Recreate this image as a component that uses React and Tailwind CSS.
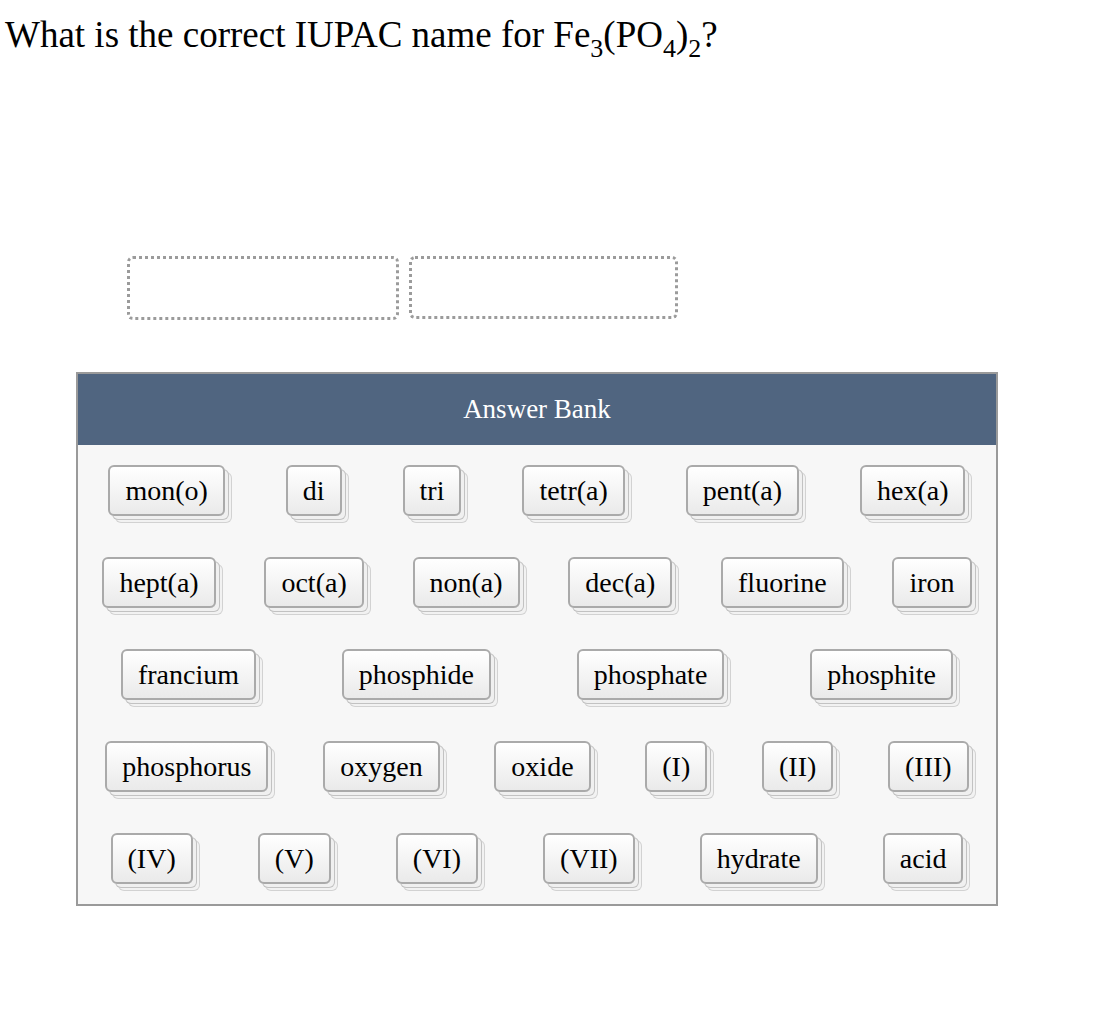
const rows = [
  ['mon(o)', 'di', 'tri', 'tetr(a)', 'pent(a)', 'hex(a)'],
  ['hept(a)', 'oct(a)', 'non(a)', 'dec(a)', 'fluorine', 'iron'],
  ['francium', 'phosphide', 'phosphate', 'phosphite'],
  ['phosphorus', 'oxygen', 'oxide', '(I)', '(II)', '(III)'],
  ['(IV)', '(V)', '(VI)', '(VII)', 'hydrate', 'acid'],
];

const Tile = ({ label }) => (
  <div className="rounded-[6px] border-2 border-[#aaaaaa] bg-gradient-to-b from-white to-[#eaeaea] px-[15px] py-[8px] text-[28px] leading-[31px] text-black shadow-[4px_4px_0_-1px_#f0f0f0,4px_4px_0_0_#c2c2c2,7px_7px_0_-1px_#f2f2f2,7px_7px_0_0_#d2d2d2]">
    {label}
  </div>
);

const Sub = ({ children }) => (
  <span className="relative top-[10px] text-[26px] leading-none">{children}</span>
);

export default function App() {
  return (
    <div className="min-h-screen bg-white text-black" style={{ fontFamily: '"Liberation Serif", "Times New Roman", serif' }}>
      <h1 className="pl-[5px] pt-[13px] text-[37px] leading-[44px] font-normal">
        What is the correct IUPAC name for Fe<Sub>3</Sub>(PO<Sub>4</Sub>)<Sub>2</Sub>?
      </h1>

      {/* drop targets */}
      <div className="mt-[199px] flex gap-[10px] pl-[127px]">
        <div className="h-[64px] w-[272px] rounded-md border-[3px] border-dotted border-[#9b9b9b]" />
        <div className="h-[63px] w-[269px] rounded-md border-[3px] border-dotted border-[#9b9b9b]" />
      </div>

      {/* answer bank */}
      <div className="ml-[76px] mt-[52px] w-[922px] border-2 border-[#9a9a9a] bg-[#f7f7f7]">
        <div className="flex h-[71px] items-center justify-center bg-[#506580] text-[27px] text-white">
          Answer Bank
        </div>
        <div className="flex flex-col gap-[41px] pb-[20px] pt-[20px]">
          {rows.map((row, i) => (
            <div key={i} className="flex justify-around">
              {row.map((t) => (
                <Tile key={t} label={t} />
              ))}
            </div>
          ))}
        </div>
      </div>
    </div>
  );
}
